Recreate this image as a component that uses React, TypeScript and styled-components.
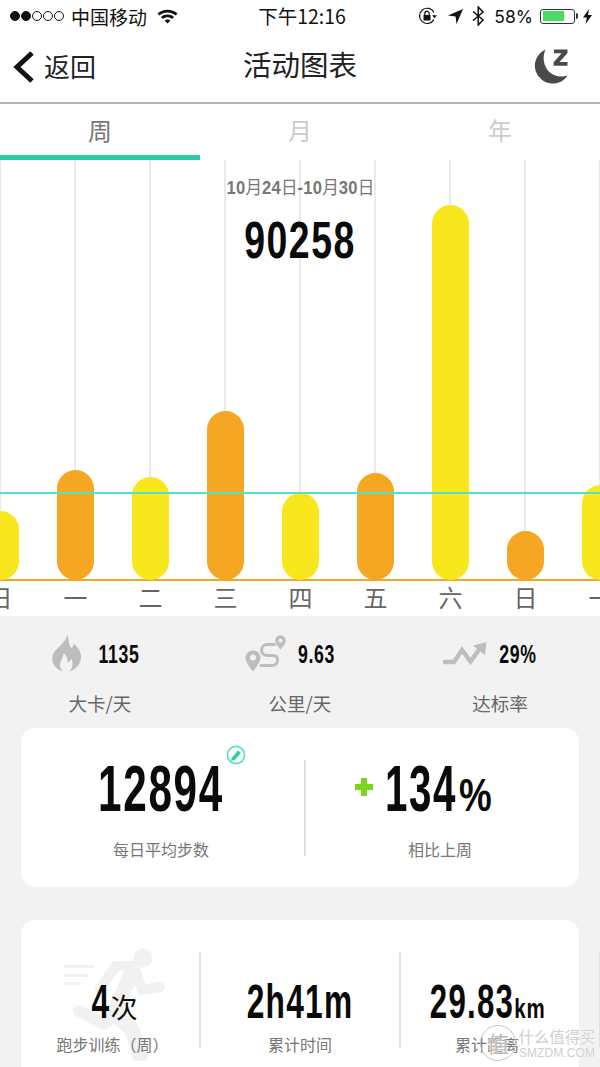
import React from "react";
import styled, { createGlobalStyle } from "styled-components";

const Global = createGlobalStyle`
  html, body { margin: 0; padding: 0; background: #fff; }
  body { font-family: "Noto Sans CJK SC", "Liberation Sans", sans-serif; }
`;

const Page = styled.div`
  position: relative;
  width: 600px;
  height: 1067px;
  overflow: hidden;
  background: #fff;
  color: #111;
`;

const StatusBar = styled.div`
  position: relative;
  height: 32px;
  display: flex;
  align-items: center;
  padding: 0 8px 0 10px;
  font-family: "Inter", "Noto Sans CJK SC", sans-serif;
  font-size: 17px;
  color: #111;
`;
const Signal = styled.div`
  display: flex;
  gap: 1px;
  margin-right: 7px;
`;
const Dot = styled.span<{ $on?: boolean }>`
  width: 10px;
  height: 10px;
  box-sizing: border-box;
  border-radius: 50%;
  border: 1px solid #111;
  background: ${(p) => (p.$on ? "#111" : "transparent")};
`;
const Carrier = styled.span`
  font-family: "Noto Sans CJK SC", sans-serif;
  font-size: 19px;
  margin-right: 10px;
`;
const Clock = styled.span`
  position: absolute;
  left: 4px;
  right: 0;
  text-align: center;
  font-size: 19.5px;
  line-height: 32px;
  font-family: "Noto Sans CJK SC", sans-serif;
`;
const StatusRight = styled.div`
  margin-left: auto;
  display: flex;
  align-items: center;
`;
const Percent = styled.span`
  font-family: "Inter", sans-serif;
  font-size: 17.5px;
  margin: 0 7px 0 9px;
`;
const Battery = styled.div`
  position: relative;
  width: 35px;
  height: 15px;
  box-sizing: border-box;
  border: 1px solid #333;
  border-radius: 3px;
  padding: 1.5px;
  margin-right: 8px;
  &::after {
    content: "";
    position: absolute;
    right: -4px;
    top: 3px;
    width: 2px;
    height: 6px;
    background: #333;
    border-radius: 0 2px 2px 0;
  }
`;
const BatteryFill = styled.div`
  height: 100%;
  background: #4cd964;
`;

const NavBar = styled.header`
  height: 70px;
  border-bottom: 2px solid #b4b4b4;
  display: flex;
  align-items: center;
  justify-content: space-between;
  padding: 0 30px 0 10px;
  position: relative;
`;
const Back = styled.div`
  display: flex;
  align-items: center;
  gap: 10px;
  font-size: 26px;
  color: #222;
`;
const BackText = styled.span`
  line-height: 34px;
  margin-top: -3px;
`;
const Title = styled.h1`
  position: absolute;
  left: 0;
  right: 0;
  top: 12px;
  margin: 0;
  text-align: center;
  font-size: 28.5px;
  line-height: 40px;
  font-weight: 400;
  color: #222;
`;

const Tabs = styled.nav`
  height: 56px;
  display: flex;
`;
const Tab = styled.div<{ $active?: boolean }>`
  width: 200px;
  box-sizing: border-box;
  text-align: center;
  font-size: 24px;
  line-height: 52px;
  color: ${(p) => (p.$active ? "#777" : "#ccc")};
  border-bottom: 5px solid ${(p) => (p.$active ? "#25cfa6" : "transparent")};
`;

const Chart = styled.section`
  position: relative;
  height: 421px;
  box-sizing: border-box;
  border-bottom: 2px solid #f5a623;
  display: flex;
  align-items: flex-end;
  margin-left: -37px;
  width: 675px;
`;
const Column = styled.div`
  position: relative;
  width: 75px;
  height: 100%;
  display: flex;
  align-items: flex-end;
  justify-content: center;
  &::before {
    content: "";
    position: absolute;
    left: 36px;
    top: 0;
    bottom: 0;
    width: 2px;
    background: #e9e9e9;
  }
`;
const Bar = styled.div<{ $h: number; $orange?: boolean }>`
  position: relative;
  width: 37px;
  height: ${(p) => p.$h}px;
  margin-bottom: -1px;
  border-radius: 18.5px;
  background: ${(p) => (p.$orange ? "#f5a623" : "#f8e71c")};
`;
const GoalLine = styled.div`
  position: absolute;
  left: 0;
  right: 0;
  top: 331.5px;
  height: 2px;
  background: #50e3c2;
`;
const ChartHead = styled.div`
  position: absolute;
  left: 37px;
  top: 0;
  width: 600px;
  display: flex;
  flex-direction: column;
  align-items: center;
`;

const Num = styled.span<{ $w: number; $size: number; $sx: number; $end?: boolean }>`
  display: inline-flex;
  justify-content: center;
  flex: none;
  width: ${(p) => p.$w}px;
  white-space: nowrap;
  font-family: "Liberation Sans", sans-serif;
  font-weight: 700;
  font-size: ${(p) => p.$size}px;
  line-height: 1;
  letter-spacing: 0.04em;
  color: #0a0a0a;
  transform: scaleX(${(p) => p.$sx});
  ${(p) => (p.$end ? "align-self: flex-end;" : "")}
`;
const DateRange = styled.div`
  margin-top: 17px;
  display: flex;
  align-items: center;
  justify-content: center;
  color: #777;
  font-size: 18px;
  line-height: 22px;
  font-family: "Liberation Sans", "Noto Sans CJK SC", sans-serif;
  font-weight: 400;
  width: 142px;
  white-space: nowrap;
`;
const DateInner = styled.span`
  display: inline-block;
  transform: scaleX(0.92);
`;
const DateDigits = styled.b`
  font-weight: 700;
  letter-spacing: 0.3px;
`;
const Total = styled.div`
  margin-top: 15px;
`;

const Days = styled.div`
  height: 35px;
  display: flex;
  width: 675px;
  margin-left: -37px;
`;
const Day = styled.div`
  width: 75px;
  text-align: center;
  font-size: 24px;
  line-height: 32px;
  color: #666;
`;

const Lower = styled.main`
  background: #f2f2f2;
  height: 451px;
  padding: 0 21px;
  box-sizing: border-box;
`;
const Summary = styled.div`
  height: 112px;
  margin: 0 -21px;
  display: flex;
`;
const SummaryItem = styled.div`
  width: 200px;
  display: flex;
  flex-direction: column;
  align-items: center;
`;
const SummaryTop = styled.div<{ $pad: number; $gap: number }>`
  height: 75px;
  width: 100%;
  box-sizing: border-box;
  padding-left: ${(p) => p.$pad}px;
  display: flex;
  align-items: center;
  gap: ${(p) => p.$gap}px;
`;
const SummaryLabel = styled.div`
  font-size: 18.5px;
  line-height: 24px;
  color: #666;
`;

const Card = styled.div<{ $h: number; $mb: number }>`
  position: relative;
  background: #fff;
  border-radius: 14px;
  height: ${(p) => p.$h}px;
  margin-bottom: ${(p) => p.$mb}px;
`;
const SplitRow = styled.div`
  display: flex;
  height: 100%;
`;
const Half = styled.div<{ $w: number; $line?: boolean }>`
  position: relative;
  width: ${(p) => p.$w}px;
  display: flex;
  flex-direction: column;
  align-items: center;
  padding: 32px 4px 0 0;
  box-sizing: border-box;
  ${(p) =>
    p.$line &&
    `&::after{content:"";position:absolute;right:-1px;top:32px;height:96px;width:2px;background:#e0e0e0;}`}
`;
const BigLine = styled.div<{ $pr?: number }>`
  position: relative;
  height: 58px;
  box-sizing: border-box;
  padding-right: ${(p) => p.$pr ?? 0}px;
  display: flex;
  align-items: center;
  justify-content: center;
`;
const EditBadge = styled.svg`
  position: absolute;
  right: -23px;
  top: -15px;
`;
const Plus = styled.span`
  position: relative;
  width: 18px;
  height: 18px;
  margin: -4px 12px 0 0;
  flex: none;
  &::before,
  &::after {
    content: "";
    position: absolute;
    background: #7ed321;
  }
  &::before { left: 0; right: 0; top: 6px; height: 6px; }
  &::after { top: 0; bottom: 0; left: 6px; width: 6px; }
`;
const CardLabel = styled.div<{ $mt: number }>`
  margin-top: ${(p) => p.$mt}px;
  font-size: 16px;
  line-height: 22px;
  color: #777;
  position: relative;
`;
const TrainRow = styled.div`
  display: flex;
  width: 600px;
  margin-left: -21px;
  height: 100%;
`;
const TrainCol = styled.div<{ $pl?: number; $pr?: number }>`
  position: relative;
  width: 200px;
  display: flex;
  flex-direction: column;
  align-items: center;
  padding: 58px ${(p) => p.$pr ?? 0}px 0 ${(p) => p.$pl ?? 0}px;
  box-sizing: border-box;
  &::after {
    content: "";
    position: absolute;
    right: -1px;
    top: 32px;
    height: 96px;
    width: 2px;
    background: #e0e0e0;
  }
`;
const Runner = styled.svg`
  position: absolute;
  left: 62px;
  top: 26px;
`;
const ValueLine = styled.div<{ $pl?: number }>`
  position: relative;
  display: flex;
  align-items: baseline;
  justify-content: center;
  height: 48px;
  padding-left: ${(p) => p.$pl ?? 0}px;
`;
const Unit = styled.span`
  font-size: 27px;
  line-height: 1;
  margin-left: 1px;
  color: #111;
`;

const Watermark = styled.div`
  position: absolute;
  left: 480px;
  top: 1025px;
  display: flex;
  align-items: center;
  gap: 2px;
  color: #cfcfcf;
  text-shadow: 0 0 1px #fff, 0 0 2px #fff;
`;
const Stamp = styled.div`
  width: 36px;
  height: 36px;
  box-sizing: border-box;
  border-radius: 50%;
  border: 1px solid #c4c4c4;
  text-align: center;
  font-size: 22px;
  line-height: 33px;
  color: #bbb;
`;
const MarkText = styled.div`
  display: flex;
  flex-direction: column;
  align-items: center;
  width: 78px;
`;
const MarkCn = styled.span`
  font-size: 15.4px;
  line-height: 19px;
  white-space: nowrap;
`;
const MarkEn = styled.span`
  font-family: "Liberation Sans", sans-serif;
  font-size: 12px;
  line-height: 14px;
  letter-spacing: 0.1px;
  white-space: nowrap;
`;

const bars: { h: number; o?: boolean }[] = [
  { h: 69 },
  { h: 110, o: true },
  { h: 103 },
  { h: 169, o: true },
  { h: 87 },
  { h: 107, o: true },
  { h: 375 },
  { h: 49, o: true },
  { h: 95 },
];
const dayNames = ["日", "一", "二", "三", "四", "五", "六", "日", "一"];

const Wifi = () => (
  <svg width="21" height="16" viewBox="0 0 21 16">
    <path d="M0.5 5.5 C6 0.5 15 0.5 20.5 5.5 L18.6 7.6 C14 3.6 7 3.6 2.4 7.6 Z" fill="#111" />
    <path d="M4 9 C7.5 5.8 13.5 5.8 17 9 L15 11 C12.5 8.8 8.5 8.8 6 11 Z" fill="#111" />
    <path d="M7.6 12.4 C9.2 11.2 11.8 11.2 13.4 12.4 L10.5 15.4 Z" fill="#111" />
  </svg>
);
const RotationLock = () => (
  <svg width="20" height="18" viewBox="0 0 20 18" style={{ marginRight: 10 }}>
    <path d="M15.8 12.6 A7.6 7.6 0 1 1 16 5.5" fill="none" stroke="#111" strokeWidth="1.2" />
    <path d="M14 8.2 L19 8.2 L16.5 11.2 Z" fill="#111" />
    <rect x="5.5" y="8" width="7" height="5.5" fill="#111" />
    <path d="M6.8 8 V6.4 a2.2 2.2 0 0 1 4.4 0 V8" fill="none" stroke="#111" strokeWidth="1.2" />
  </svg>
);
const Arrow = () => (
  <svg width="15" height="15" viewBox="0 0 15 15" style={{ marginRight: 9 }}>
    <path d="M0 6.5 L15 0 L8.5 15 L7.6 7.4 Z" fill="#111" />
  </svg>
);
const Bluetooth = () => (
  <svg width="13" height="20" viewBox="0 0 13 20">
    <path d="M1 5.5 L11 14 L6.2 19 V1 L11 6 L1 14.5" fill="none" stroke="#111" strokeWidth="1.5" />
  </svg>
);
const Bolt = () => (
  <svg width="9" height="15" viewBox="0 0 9 15">
    <path d="M6 0 L0 8.5 H3.8 L2.6 15 L9 6 H5 Z" fill="#111" />
  </svg>
);
const Chevron = () => (
  <svg width="24" height="34" viewBox="0 0 24 34">
    <path d="M22 3 L7 17 L22 31" fill="none" stroke="#111" strokeWidth="5" />
  </svg>
);
const Moon = () => (
  <svg width="36" height="36" viewBox="0 0 36 36">
    <path
      d="M11.5 0.5 C7.5 9 10 21 19 25.5 C24 28 29 28 33.5 26.5 C29.5 33 21 36.5 12.5 33.5 C3 29.5 -1.5 19 2 10.5 C3.5 6.5 7 2.5 11.5 0.5 Z"
      fill="#4a4a4a"
    />
    <path d="M20 0.5 H33.5 V4 L25.5 13 H33.5 V16.8 H19.6 V13.2 L27.6 4.3 H20 Z" fill="#4a4a4a" />
  </svg>
);
const Flame = () => (
  <svg width="30" height="37" viewBox="0 0 30 37">
    <path
      d="M15.5 0 C17.5 6 16 9 19.5 13 C21 12 21.5 10.5 21.5 8.5 C26 12.5 29.5 17 29 23 C28.5 30 23 35 17.5 36.5 C21 32 21.5 27.5 19 23.5 C18.5 26 17.3 27.2 15.5 27.8 C16 23.5 14.5 20.5 11.5 18 C11.8 23 6.5 27 8.5 33 C9 34.5 10 35.6 11.5 36.5 C5 35 0 29.5 0.3 23 C0.6 16 6 13.5 9.5 9.5 C12 6.5 14.5 4 15.5 0 Z"
      fill="#bdbdbd"
    />
  </svg>
);
const Route = () => (
  <svg width="41" height="38" viewBox="0 0 41 38">
    <path
      d="M8 15.5 C3.6 15.5 0.5 18.8 0.5 22.6 C0.5 27 4.5 32 8 36.5 C11.5 32 15.5 27 15.5 22.6 C15.5 18.8 12.4 15.5 8 15.5 Z"
      fill="#bdbdbd"
    />
    <circle cx="8" cy="22.5" r="3" fill="#f2f2f2" />
    <path
      d="M35.5 0.5 C32.5 0.5 30.3 2.7 30.3 5.4 C30.3 8.2 33 11.5 35.5 14.5 C38 11.5 40.7 8.2 40.7 5.4 C40.7 2.7 38.5 0.5 35.5 0.5 Z"
      fill="#bdbdbd"
    />
    <circle cx="35.5" cy="5.4" r="2" fill="#f2f2f2" />
    <path
      d="M29.5 9.5 H22.5 C18.5 9.5 16.5 12.5 16.5 15 C16.5 18 18.8 20.5 22.5 20.5 H28 C31 20.5 32.5 22.5 32.5 25 C32.5 28 30.5 30.5 27 30.5 H16"
      fill="none"
      stroke="#bdbdbd"
      strokeWidth="3"
      strokeLinecap="round"
    />
  </svg>
);
const Trend = () => (
  <svg width="44" height="24" viewBox="0 0 44 24">
    <path
      d="M2 20 H11 L19 8 L27.5 19.5 L38 5"
      fill="none"
      stroke="#bdbdbd"
      strokeWidth="4.4"
      strokeLinecap="round"
      strokeLinejoin="miter"
    />
    <path d="M30 3.4 L43.5 0 L42 13 Z" fill="#bdbdbd" />
  </svg>
);
const Pencil = () => (
  <EditBadge width="20" height="20" viewBox="0 0 20 20">
    <circle cx="10" cy="10" r="8.6" fill="none" stroke="#50e3c2" strokeWidth="1.6" />
    <path d="M6.5 13 L12 6.4 L14 8 L8.4 14.4 L6 15 Z" fill="#2fcfa8" stroke="#2fcfa8" strokeWidth="1.4" strokeLinejoin="round" />
  </EditBadge>
);
const RunnerIcon = () => (
  <Runner width="104" height="115" viewBox="0 0 104 115">
    <g fill="#f1f1f1" stroke="none">
      <rect x="2" y="19" width="30" height="3" />
      <rect x="2" y="28" width="24" height="3" />
      <rect x="2" y="36" width="17" height="3" />
      <circle cx="81" cy="12" r="9.5" />
    </g>
    <g fill="none" stroke="#f1f1f1" strokeLinecap="round" strokeLinejoin="round">
      <path d="M54 20 H72 L80 44 L98 41" strokeWidth="10" />
      <path d="M54 20 L38 42" strokeWidth="10" />
      <path d="M68 30 L52 68 L70 84 L78 110" strokeWidth="15" />
      <path d="M52 70 L42 78 L17 65" strokeWidth="12" />
    </g>
  </Runner>
);

export default function App() {
  return (
    <Page>
      <Global />
      <StatusBar>
        <Signal>
          <Dot $on />
          <Dot $on />
          <Dot />
          <Dot />
          <Dot />
        </Signal>
        <Carrier>中国移动</Carrier>
        <Wifi />
        <Clock>下午12:16</Clock>
        <StatusRight>
          <RotationLock />
          <Arrow />
          <Bluetooth />
          <Percent>58%</Percent>
          <Battery>
            <BatteryFill style={{ width: "72%" }} />
          </Battery>
          <Bolt />
        </StatusRight>
      </StatusBar>
      <NavBar>
        <Back>
          <Chevron />
          <BackText>返回</BackText>
        </Back>
        <Title>活动图表</Title>
        <Moon />
      </NavBar>
      <Tabs>
        <Tab $active>周</Tab>
        <Tab>月</Tab>
        <Tab>年</Tab>
      </Tabs>
      <Chart>
        {bars.map((b, i) => (
          <Column key={i}>
            <Bar $h={b.h} $orange={b.o} />
          </Column>
        ))}
        <GoalLine />
        <ChartHead>
          <DateRange>
            <DateInner>
              <DateDigits>10</DateDigits>月<DateDigits>24</DateDigits>日<DateDigits>-10</DateDigits>月
              <DateDigits>30</DateDigits>日
            </DateInner>
          </DateRange>
          <Total>
            <Num $w={110} $size={52} $sx={0.72}>90258</Num>
          </Total>
        </ChartHead>
      </Chart>
      <Days>
        {dayNames.map((d, i) => (
          <Day key={i}>{d}</Day>
        ))}
      </Days>
      <Lower>
        <Summary>
          <SummaryItem>
            <SummaryTop $pad={52} $gap={17}>
              <Flame />
              <Num $w={40} $size={26} $sx={0.68}>1135</Num>
            </SummaryTop>
            <SummaryLabel>大卡/天</SummaryLabel>
          </SummaryItem>
          <SummaryItem>
            <SummaryTop $pad={45} $gap={12}>
              <Route />
              <Num $w={37} $size={26} $sx={0.68}>9.63</Num>
            </SummaryTop>
            <SummaryLabel>公里/天</SummaryLabel>
          </SummaryItem>
          <SummaryItem>
            <SummaryTop $pad={43} $gap={12}>
              <Trend />
              <Num $w={38} $size={26} $sx={0.68}>29%</Num>
            </SummaryTop>
            <SummaryLabel>达标率</SummaryLabel>
          </SummaryItem>
        </Summary>
        <Card $h={159} $mb={33}>
          <SplitRow>
            <Half $w={284} $line>
              <BigLine>
                <Num $w={124} $size={64} $sx={0.66}>12894</Num>
                <Pencil />
              </BigLine>
              <CardLabel $mt={20}>每日平均步数</CardLabel>
            </Half>
            <Half $w={274}>
              <BigLine $pr={30}>
                <Plus />
                <Num $w={72} $size={64} $sx={0.63}>134</Num>
                <Num $w={38} $size={46} $sx={0.8} $end>%</Num>
              </BigLine>
              <CardLabel $mt={20}>相比上周</CardLabel>
            </Half>
          </SplitRow>
        </Card>
        <Card $h={200} $mb={0}>
          <TrainRow>
            <TrainCol $pl={25}>
              <RunnerIcon />
              <ValueLine $pl={4}>
                <Num $w={18} $size={48} $sx={0.66}>4</Num>
                <Unit>次</Unit>
              </ValueLine>
              <CardLabel $mt={7}>跑步训练（周）</CardLabel>
            </TrainCol>
            <TrainCol>
              <ValueLine>
                <Num $w={106} $size={48} $sx={0.66}>2h41m</Num>
              </ValueLine>
              <CardLabel $mt={7}>累计时间</CardLabel>
            </TrainCol>
            <TrainCol $pr={26}>
              <ValueLine>
                <Num $w={86} $size={48} $sx={0.65}>29.83</Num>
                <Num $w={30} $size={27} $sx={0.76}>km</Num>
              </ValueLine>
              <CardLabel $mt={7}>累计距离</CardLabel>
            </TrainCol>
          </TrainRow>
        </Card>
      </Lower>
      <Watermark>
        <Stamp>值</Stamp>
        <MarkText>
          <MarkCn>什么值得买</MarkCn>
          <MarkEn>SMZDM.COM</MarkEn>
        </MarkText>
      </Watermark>
    </Page>
  );
}
